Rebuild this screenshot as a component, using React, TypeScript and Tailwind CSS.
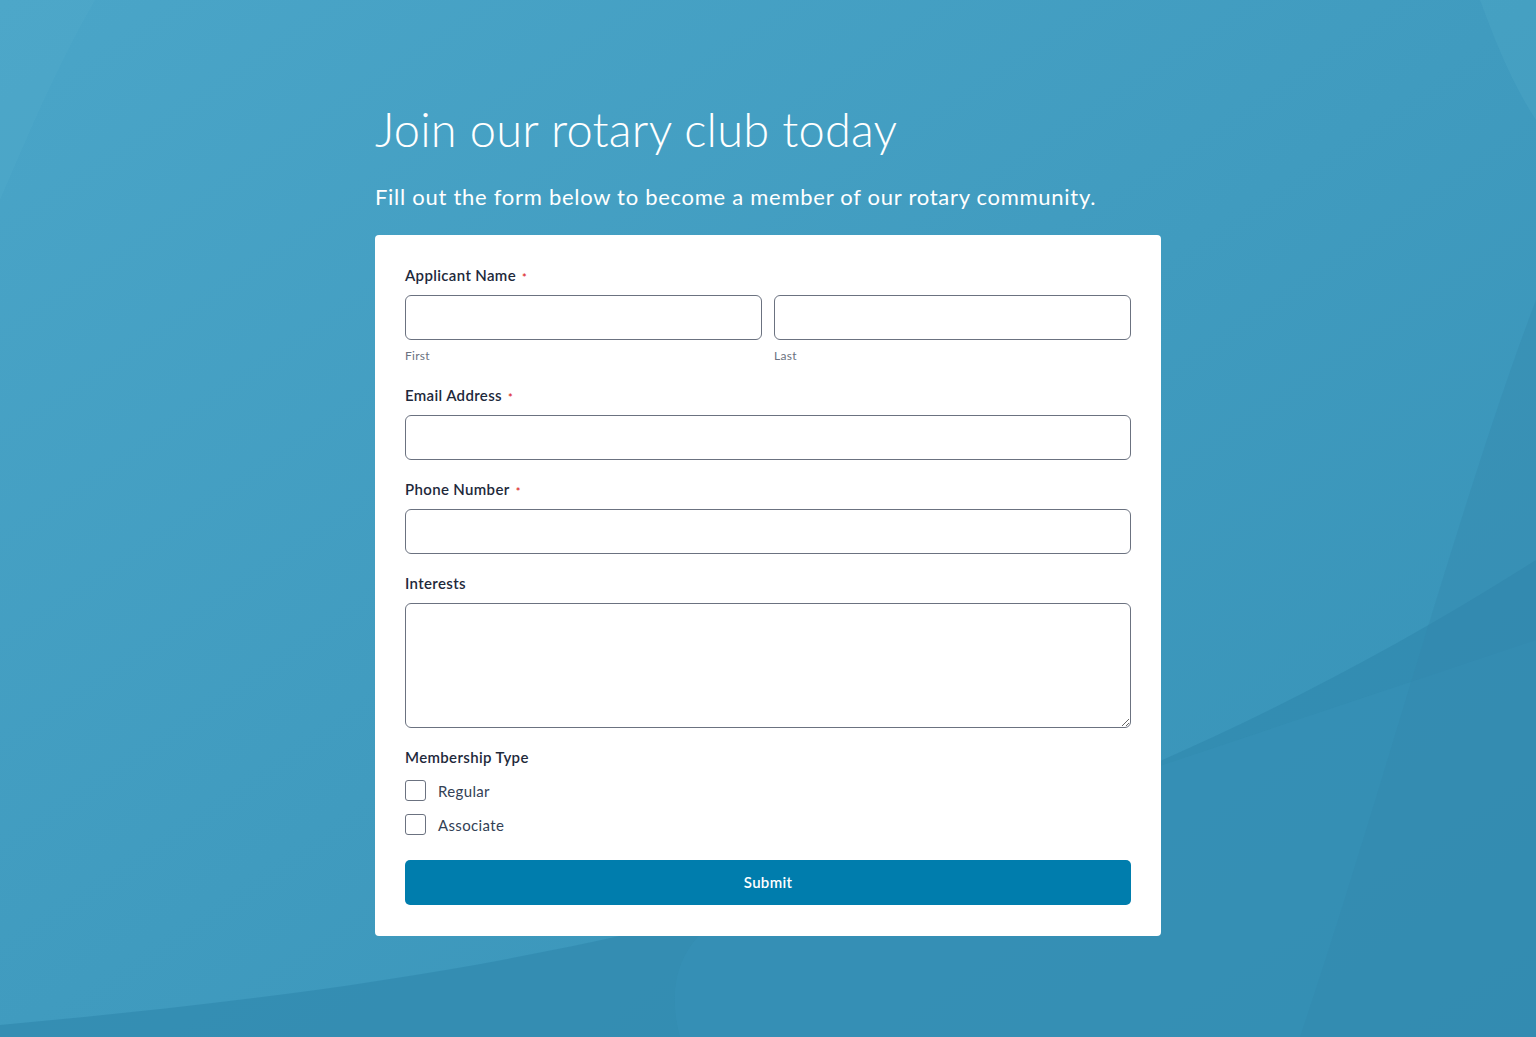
import React from 'react';

const Field = ({ label, required }: { label: string; required?: boolean }) => (
  <label className="mb-[10px] flex items-center text-[15px] font-semibold leading-[20px] tracking-[0.35px] text-[#1e293b]">
    {label}
    {required && <span className="ml-[6px] mt-[4px] text-[11px] leading-[11px] text-[#dc2626]">*</span>}
  </label>
);

const inputCls =
  'h-[45px] w-full rounded-[6px] border border-[#6b7280] bg-white px-3 text-[15px] outline-none';

export default function App() {
  return (
    <div
      className="relative min-h-[1037px] w-full overflow-hidden bg-gradient-to-br from-[#4aa5c8] via-[#409bbf] to-[#3591b6]"
      style={{ fontFamily: 'Lato, "Open Sans", sans-serif' }}
    >
      {/* background swooshes */}
      <svg className="absolute inset-0 h-full w-full" viewBox="0 0 1536 1037" preserveAspectRatio="none">
        <path d="M0 1037 L0 1025 C500 980 1000 900 1536 560 L1536 1037 Z" fill="#3189af" opacity="0.75" />
        <path d="M680 1037 C660 960 700 920 760 900 L1536 640 L1536 1037 Z" fill="#3a96bb" opacity="0.35" />
        <path d="M1300 1037 C1380 800 1460 500 1536 300 L1536 1037 Z" fill="#3388ad" opacity="0.35" />
        <path d="M0 0 L95 0 C60 60 30 130 0 200 Z" fill="#52abcb" opacity="0.35" />
        <path d="M1480 0 L1536 0 L1536 120 C1510 80 1495 40 1480 0 Z" fill="#52abcb" opacity="0.3" />
      </svg>

      <div className="relative mx-auto w-[786px] pt-[101px]">
        <h1 className="text-[47px] font-light leading-[56px] tracking-[0.2px] text-white">Join our rotary club today</h1>
        <p className="mt-[26px] text-[22px] leading-[28px] tracking-[0.72px] text-white">
          Fill out the form below to become a member of our rotary community.
        </p>

        <form className="mt-[24px] rounded-[4px] bg-white px-[30px] pt-[30px] pb-[31px]">
          <Field label="Applicant Name" required />
          <div className="grid grid-cols-2 gap-x-[12px]">
            <div>
              <input className={inputCls} />
              <div className="mt-[8px] text-[12px] leading-[16px] tracking-[0.3px] text-[#6b7280]">First</div>
            </div>
            <div>
              <input className={inputCls} />
              <div className="mt-[8px] text-[12px] leading-[16px] tracking-[0.3px] text-[#6b7280]">Last</div>
            </div>
          </div>

          <div className="mt-[21px]">
            <Field label="Email Address" required />
            <input className={inputCls} />
          </div>

          <div className="mt-[19px]">
            <Field label="Phone Number" required />
            <input className={inputCls} />
          </div>

          <div className="mt-[19px]">
            <Field label="Interests" />
            <textarea className="block h-[125px] w-full rounded-[6px] border border-[#6b7280] bg-white px-3 py-2 text-[15px] outline-none" />
          </div>

          <div className="mt-[19px]">
            <div className="text-[15px] font-semibold leading-[20px] tracking-[0.35px] text-[#1e293b]">Membership Type</div>
            <div className="mt-[13px] flex flex-col gap-[13px]">
              {['Regular', 'Associate'].map((o) => (
                <label key={o} className="flex items-center gap-[12px]">
                  <span className="h-[21px] w-[21px] rounded-[3px] border border-[#6b7280] bg-white" />
                  <span className="text-[15px] leading-[20px] tracking-[0.35px] text-[#334155]">{o}</span>
                </label>
              ))}
            </div>
          </div>

          <button
            type="button"
            className="mt-[25px] h-[45px] w-full rounded-[5px] bg-[#007dad] text-[15px] font-semibold tracking-[0.3px] text-white"
          >
            Submit
          </button>
        </form>
      </div>
    </div>
  );
}
